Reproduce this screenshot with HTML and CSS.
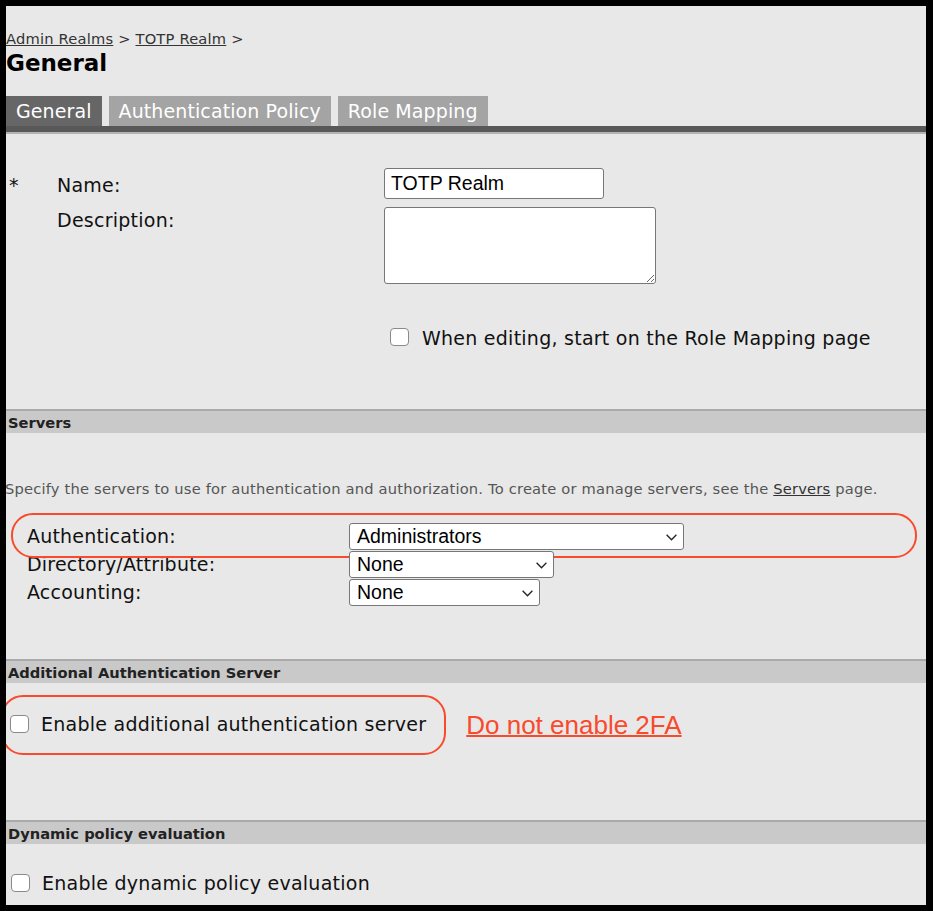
FILE: index.html
```html
<!DOCTYPE html>
<html lang="en">
<head>
<meta charset="utf-8">
<title>General - TOTP Realm</title>
<link rel="stylesheet" href="styles.css">
</head>
<body>
<div class="page">
  <div class="crumbs"><a href="#">Admin Realms</a> &gt; <a href="#">TOTP Realm</a> &gt;</div>
  <h1 class="title">General</h1>

  <div class="tabs">
    <span class="tab active">General</span>
    <span class="tab">Authentication Policy</span>
    <span class="tab">Role Mapping</span>
  </div>

  <div class="form">
    <div class="frow">
      <span class="req">*</span>
      <label class="flabel flabel-name">Name:</label>
      <input class="text" type="text" value="TOTP Realm">
    </div>
    <div class="frow frow-desc">
      <span class="req"></span>
      <label class="flabel flabel-desc">Description:</label>
      <textarea class="area"></textarea>
    </div>
    <div class="frow frow-check">
      <span class="req"></span>
      <span class="flabel"></span>
      <label class="check"><input class="cb" type="checkbox"><span>When editing, start on the Role Mapping page</span></label>
    </div>
  </div>

  <div class="bar bar-servers">Servers</div>
  <p class="desc">Specify the servers to use for authentication and authorization. To create or manage servers, see the <a href="#">Servers</a> page.</p>

  <div class="srows">
    <div class="srow marked">
      <label class="slabel">Authentication:</label>
      <span class="sel sel-auth"><select><option>Administrators</option></select><svg viewBox="0 0 11 7"><path d="M0.6 0.8 L5.5 5.8 L10.4 0.8" fill="none" stroke="#222" stroke-width="1.3"/></svg></span>
    </div>
    <div class="srow">
      <label class="slabel">Directory/Attribute:</label>
      <span class="sel sel-dir"><select><option>None</option></select><svg viewBox="0 0 11 7"><path d="M0.6 0.8 L5.5 5.8 L10.4 0.8" fill="none" stroke="#222" stroke-width="1.3"/></svg></span>
    </div>
    <div class="srow">
      <label class="slabel">Accounting:</label>
      <span class="sel sel-acc"><select><option>None</option></select><svg viewBox="0 0 11 7"><path d="M0.6 0.8 L5.5 5.8 L10.4 0.8" fill="none" stroke="#222" stroke-width="1.3"/></svg></span>
    </div>
  </div>

  <div class="bar bar-add">Additional Authentication Server</div>
  <div class="addrow">
    <label class="oval"><input class="cb" type="checkbox"><span>Enable additional authentication server</span></label>
    <a class="note" href="#">Do not enable 2FA</a>
  </div>

  <div class="bar bar-dyn">Dynamic policy evaluation</div>
  <label class="dynrow"><input class="cb" type="checkbox"><span>Enable dynamic policy evaluation</span></label>
</div>
</body>
</html>
```
FILE: styles.css
```css
html {
  background: #000;
}
body {
  margin: 6px 7px 6px 6px;
  height: 899px;
  background: #e8e8e8;
  font-family: "DejaVu Sans", Verdana, sans-serif;
  color: #111;
}
.page {
  padding-top: 24px;
}
.crumbs {
  font-size: 14.67px;
  line-height: 17px;
  letter-spacing: 0.2px;
  color: #333;
}
.crumbs a {
  color: #333;
  text-decoration: underline;
}
.title {
  margin: 3px 0 0;
  font-size: 23px;
  line-height: 27px;
  font-weight: bold;
  color: #000;
}
.tabs {
  display: flex;
  gap: 7px;
  margin-top: 19px;
  border-bottom: 6px solid #585858;
  box-shadow: 0 2px 0 #b3b3b3;
}
.tab {
  font-size: 19px;
  line-height: 22px;
  letter-spacing: 0.1px;
  padding: 4px 10px;
  color: #fff;
  background: #a4a4a4;
}
.tab.active {
  background: #666;
}

/* form */
.form {
  padding-top: 36px;
}
.frow {
  display: flex;
  align-items: flex-start;
  font-size: 19px;
  line-height: 22px;
  letter-spacing: 0.25px;
}
.req {
  width: 51px;
  padding-left: 3px;
  box-sizing: border-box;
  padding-top: 6px;
}
.flabel {
  width: 327px;
}
.flabel-name {
  padding-top: 6px;
}
.flabel-desc {
  padding-top: 2px;
}
.frow-desc {
  margin-top: 8px;
}
.frow-check {
  margin-top: 40px;
}
.check span {
  padding-top: 3px;
}
.text {
  box-sizing: border-box;
  width: 220px;
  height: 31px;
  margin: 0;
  padding: 0 6px;
  border: 1px solid #777;
  border-radius: 3px;
  background: #fff;
  font-family: "Liberation Sans", Arial, sans-serif;
  font-size: 19.5px;
  letter-spacing: 0;
  color: #000;
}
.area {
  box-sizing: border-box;
  width: 272px;
  height: 77px;
  margin: 0;
  border: 1px solid #777;
  border-radius: 3px;
  background: #fff;
}
.check {
  display: flex;
  align-items: center;
  gap: 13px;
  margin-left: 6px;
}
.cb {
  appearance: none;
  -webkit-appearance: none;
  box-sizing: border-box;
  width: 19px;
  height: 18px;
  margin: 0;
  border: 1px solid #8a8a8a;
  border-radius: 4px;
  background: #fff;
  flex: none;
}

/* section bars */
.bar {
  border-top: 2px solid #aaa;
  background: #c9c9c9;
  font-size: 14.67px;
  line-height: 17px;
  font-weight: bold;
  padding: 3px 2px 2px;
  color: #222;
}
.bar-servers {
  margin-top: 60px;
}
.desc {
  margin: 47px 0 0 -1px;
  font-size: 14.67px;
  line-height: 17px;
  letter-spacing: 0.2px;
  color: #555;
}
.desc a {
  color: #333;
  text-decoration: underline;
}

.srows {
  margin-top: 25px;
}
.srow {
  display: flex;
  align-items: center;
  height: 28px;
  font-size: 19px;
  letter-spacing: 0.2px;
}
.srow.marked {
  position: relative;
}
.srow.marked::after {
  content: "";
  position: absolute;
  left: 5px;
  right: 9px;
  top: -9px;
  bottom: -8px;
  border: 2.5px solid #f84a2c;
  border-radius: 22px;
  pointer-events: none;
}
.slabel {
  width: 343px;
  padding-left: 21px;
  box-sizing: border-box;
}
.sel {
  position: relative;
  display: inline-block;
  height: 27px;
}
.sel select {
  appearance: none;
  -webkit-appearance: none;
  box-sizing: border-box;
  height: 27px;
  margin: 0;
  padding: 0 0 0 7px;
  border: 1px solid #777;
  border-radius: 3px;
  background: #fff;
  font-family: "Liberation Sans", Arial, sans-serif;
  font-size: 19.5px;
  letter-spacing: 0;
  color: #000;
}
.sel svg {
  position: absolute;
  right: 7px;
  top: 11px;
  width: 11px;
  height: 7px;
}
.sel-auth select { width: 335px; }
.sel-dir select { width: 205px; }
.sel-acc select { width: 191px; }

.bar-add {
  margin-top: 53px;
}
.addrow {
  display: flex;
  align-items: center;
  margin-top: 12px;
}
.oval {
  display: flex;
  align-items: center;
  gap: 12px;
  box-sizing: border-box;
  height: 60px;
  margin-left: -5px;
  padding: 0 18px 2px 7px;
  border: 2.5px solid #f84a2c;
  border-radius: 22px;
  font-size: 19px;
  line-height: 22px;
  letter-spacing: 0.25px;
}
.note {
  margin-left: 20px;
  font-family: "Liberation Sans", Arial, sans-serif;
  font-size: 26px;
  line-height: 30px;
  color: #f84a2c;
  text-decoration: underline;
  text-decoration-thickness: 1.5px;
}
.bar-dyn {
  margin-top: 65px;
}
.dynrow {
  display: flex;
  align-items: flex-start;
  gap: 12px;
  margin-top: 30px;
  padding-left: 5px;
  font-size: 19px;
  line-height: 22px;
  letter-spacing: 0.25px;
}
.dynrow span {
  margin-top: -2px;
}
```
